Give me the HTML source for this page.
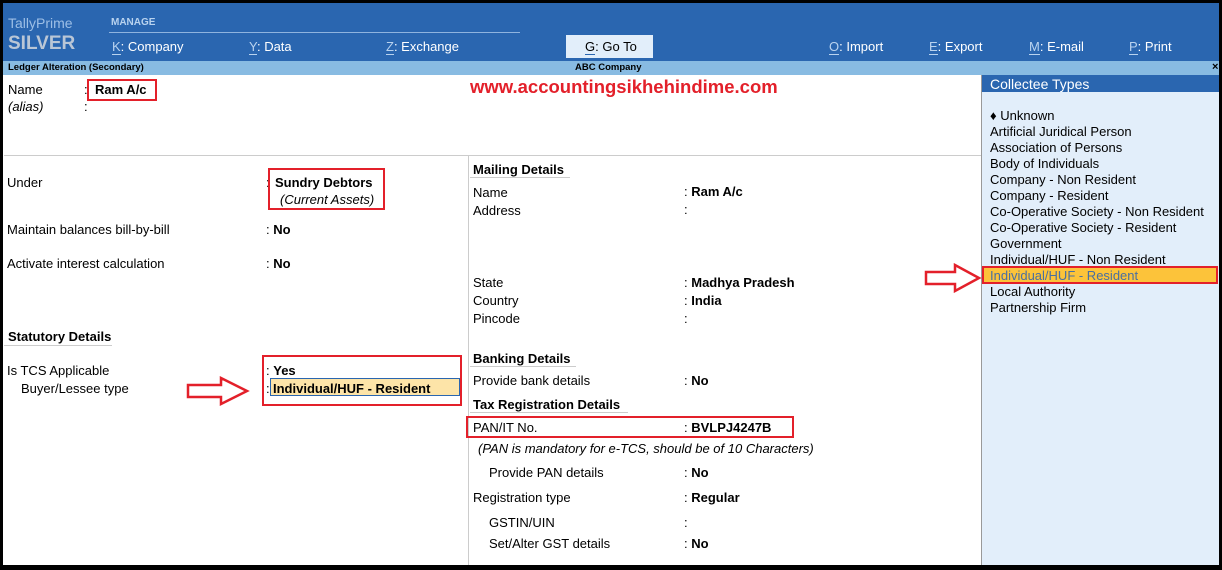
<!DOCTYPE html>
<html><head><style>
*{margin:0;padding:0;box-sizing:border-box}
body{width:1222px;height:570px;position:relative;overflow:hidden;background:#000;font-family:"Liberation Sans",Arial,sans-serif;font-size:13px;color:#000}
.a{position:absolute;white-space:nowrap}
.b{font-weight:bold}
.hdr{position:absolute;left:3px;top:3px;width:1216px;height:58px;background:#2a66b0}
.m{color:#fff;font-size:13px}
.m u{color:#b9d3ef;text-decoration:none;border-bottom:1px solid #b9d3ef}
.red{position:absolute;border:2px solid #e3202a}
</style></head><body>
<div class="hdr"></div>
<div class="a" style="left:8px;top:15px;color:#9dbfe6;font-size:14px">TallyPrime</div>
<div class="a b" style="left:8px;top:33px;color:#b9c6d6;font-size:19px">SILVER</div>
<div class="a b" style="left:111px;top:17px;color:#b9d3ef;font-size:10px">MANAGE</div>
<div class="a" style="left:109px;top:32px;width:411px;height:1px;background:#8fb4df"></div>
<div class="a m" style="left:112px;top:39px"><u>K</u>: Company</div>
<div class="a m" style="left:249px;top:39px"><u>Y</u>: Data</div>
<div class="a m" style="left:386px;top:39px"><u>Z</u>: Exchange</div>
<div class="a" style="left:566px;top:35px;width:87px;height:23px;background:#e2eefa"></div>
<div class="a" style="left:585px;top:39px;font-size:13px"><u style="text-decoration:none;border-bottom:1px solid #2a66b0">G</u>: Go To</div>
<div class="a m" style="left:829px;top:39px"><u>O</u>: Import</div>
<div class="a m" style="left:929px;top:39px"><u>E</u>: Export</div>
<div class="a m" style="left:1029px;top:39px"><u>M</u>: E-mail</div>
<div class="a m" style="left:1129px;top:39px"><u>P</u>: Print</div>
<div class="a" style="left:3px;top:61px;width:1216px;height:14px;background:#88bbe2"></div>
<div class="a b" style="left:8px;top:62px;font-size:9.5px">Ledger Alteration (Secondary)</div>
<div class="a b" style="left:575px;top:62px;font-size:9.5px">ABC Company</div>
<div class="a b" style="left:1212px;top:61px;font-size:11px">×</div>
<div class="a" style="left:3px;top:75px;width:978px;height:490px;background:#fff"></div>
<div class="a" style="left:981px;top:75px;width:238px;height:490px;background:#e2eefa;border-left:1px solid #999"></div>
<div class="a" style="left:982px;top:75px;width:237px;height:17px;background:#2a66b0"></div>
<div class="a" style="left:990px;top:76px;color:#fff;font-size:14px">Collectee Types</div>
<div class="a" style="left:990px;top:108px;line-height:16px">♦ Unknown<br>Artificial Juridical Person<br>Association of Persons<br>Body of Individuals<br>Company - Non Resident<br>Company - Resident<br>Co-Operative Society - Non Resident<br>Co-Operative Society - Resident<br>Government<br>Individual/HUF - Non Resident<br><span style="color:#4a6fa0">Individual/HUF - Resident</span><br>Local Authority<br>Partnership Firm</div>
<div class="a" style="left:982px;top:266px;width:236px;height:18px;border:2px solid #e3202a;background:#fcc33a"></div>
<div class="a" style="left:990px;top:268px;color:#4a6fa0">Individual/HUF - Resident</div>
<div class="a" style="left:4px;top:155px;width:977px;height:1px;background:#ccc"></div>
<div class="a" style="left:468px;top:156px;width:1px;height:409px;background:#ccc"></div>
<div class="a" style="left:8px;top:82px">Name</div><div class="a" style="left:84px;top:82px">:</div>
<div class="a" style="left:8px;top:99px;font-style:italic">(alias)</div><div class="a" style="left:84px;top:99px">:</div>
<div class="red" style="left:87px;top:79px;width:70px;height:22px"></div>
<div class="a b" style="left:95px;top:82px">Ram A/c</div>
<div class="a b" style="left:470px;top:76px;color:#e3202a;font-size:18.5px">www.accountingsikhehindime.com</div>
<div class="a" style="left:7px;top:175px">Under</div><div class="a" style="left:266px;top:175px">:</div>
<div class="red" style="left:268px;top:168px;width:117px;height:42px"></div>
<div class="a b" style="left:275px;top:175px">Sundry Debtors</div>
<div class="a" style="left:280px;top:192px;font-style:italic">(Current Assets)</div>
<div class="a" style="left:7px;top:222px">Maintain balances bill-by-bill</div><div class="a" style="left:266px;top:222px">: <b>No</b></div>
<div class="a" style="left:7px;top:256px">Activate interest calculation</div><div class="a" style="left:266px;top:256px">: <b>No</b></div>
<div class="a b" style="left:8px;top:329px;font-size:13px">Statutory Details</div>
<div class="a" style="left:4px;top:345px;width:108px;height:1px;background:#ccc"></div>
<div class="a" style="left:7px;top:363px">Is TCS Applicable</div>
<div class="a" style="left:21px;top:381px">Buyer/Lessee type</div>
<div class="red" style="left:262px;top:355px;width:200px;height:51px"></div>
<div class="a" style="left:266px;top:363px">: <b>Yes</b></div>
<div class="a" style="left:266px;top:381px">:</div>
<div class="a" style="left:270px;top:378px;width:190px;height:18px;background:#fde4a8;border:1px solid #2a66b0"></div>
<div class="a b" style="left:273px;top:381px">Individual/HUF - Resident</div>
<svg class="a" style="left:186px;top:376px" width="64" height="30"><path d="M2 9 H35 V2 L61 15 L35 28 V21 H2 Z" fill="#fff" stroke="#e3202a" stroke-width="2.5"/></svg>
<svg class="a" style="left:924px;top:263px" width="58" height="30"><path d="M2 9 H31 V2 L55 15 L31 28 V21 H2 Z" fill="#fff" stroke="#e3202a" stroke-width="2.5"/></svg>
<div class="a b" style="left:473px;top:162px;font-size:13px">Mailing Details</div>
<div class="a" style="left:470px;top:177px;width:100px;height:1px;background:#ccc"></div>
<div class="a" style="left:473px;top:184px;line-height:18px">Name<br>Address</div>
<div class="a" style="left:684px;top:184px">: <b>Ram A/c</b></div><div class="a" style="left:684px;top:202px">:</div>
<div class="a" style="left:473px;top:274px;line-height:18px">State<br>Country<br>Pincode</div>
<div class="a" style="left:684px;top:274px;line-height:18px">: <b>Madhya Pradesh</b><br>: <b>India</b><br>:</div>
<div class="a b" style="left:473px;top:351px;font-size:13px">Banking Details</div>
<div class="a" style="left:470px;top:366px;width:106px;height:1px;background:#ccc"></div>
<div class="a" style="left:473px;top:373px">Provide bank details</div><div class="a" style="left:684px;top:373px">: <b>No</b></div>
<div class="a b" style="left:473px;top:397px;font-size:13px">Tax Registration Details</div>
<div class="a" style="left:470px;top:412px;width:158px;height:1px;background:#ccc"></div>
<div class="red" style="left:466px;top:416px;width:328px;height:22px"></div>
<div class="a" style="left:473px;top:420px">PAN/IT No.</div><div class="a" style="left:684px;top:420px">: <b>BVLPJ4247B</b></div>
<div class="a" style="left:478px;top:441px;font-style:italic">(PAN is mandatory for e-TCS, should be of 10 Characters)</div>
<div class="a" style="left:489px;top:465px">Provide PAN details</div><div class="a" style="left:684px;top:465px">: <b>No</b></div>
<div class="a" style="left:473px;top:490px">Registration type</div><div class="a" style="left:684px;top:490px">: <b>Regular</b></div>
<div class="a" style="left:489px;top:515px">GSTIN/UIN</div><div class="a" style="left:684px;top:515px">:</div>
<div class="a" style="left:489px;top:536px">Set/Alter GST details</div><div class="a" style="left:684px;top:536px">: <b>No</b></div>
</body></html>
